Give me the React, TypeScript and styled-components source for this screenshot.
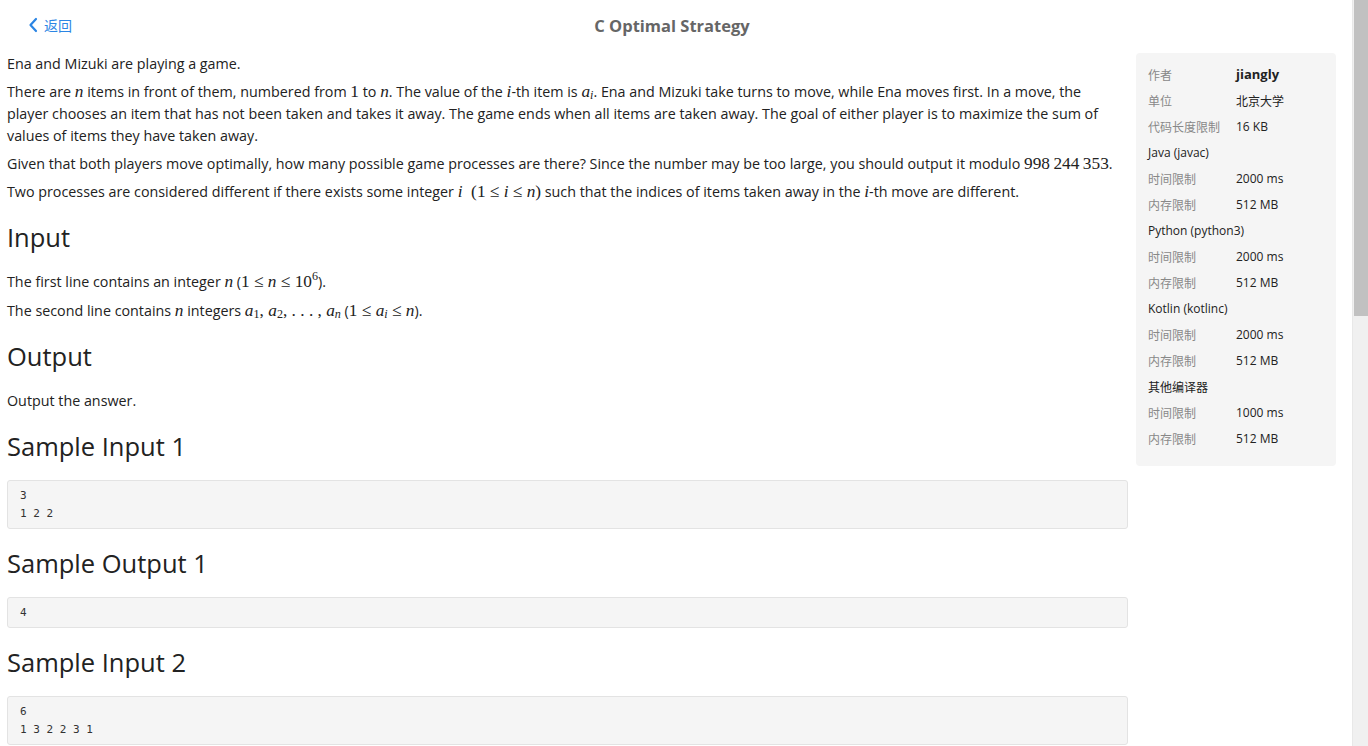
import React from "react";
import styled, { createGlobalStyle } from "styled-components";

const Global = createGlobalStyle`
  html, body { margin: 0; padding: 0; background: #fff; }
  body {
    font-family: "Open Sans", "Noto Sans", "Noto Sans CJK SC", sans-serif;
    color: #222;
  }
`;

const Page = styled.div`
  min-height: 1767px;
  margin-right: 16px;
  box-sizing: border-box;
`;

const ScrollTrack = styled.div`
  position: fixed;
  top: 0;
  right: 0;
  width: 16px;
  height: 100vh;
  background: #f0f0f0;
  border-left: 1px solid #e8e8e8;
  box-sizing: border-box;
`;

const ScrollThumb = styled.div`
  margin-left: 1px;
  width: 14px;
  height: 316px;
  background: #c1c1c1;
`;

const Header = styled.header`
  height: 50px;
  display: grid;
  grid-template-columns: 1fr auto 1fr;
  align-items: center;
  padding: 0 28px;
`;

const BackLink = styled.a`
  display: inline-flex;
  align-items: center;
  gap: 6px;
  color: #2b85e4;
  font-size: 14px;
  font-family: "Noto Sans CJK SC", sans-serif;
  text-decoration: none;
  cursor: pointer;
  justify-self: start;
`;

const Title = styled.h1`
  margin: 0;
  font-size: 16.5px;
  font-weight: 700;
  color: #666;
  font-family: "Open Sans", "Noto Sans CJK SC", sans-serif;
  transform: translateX(-4px);
`;

const Layout = styled.div`
  display: grid;
  grid-template-columns: 1fr 200px;
  column-gap: 8px;
  align-items: start;
  padding: 3px 16px 0 7px;
`;

const Content = styled.main`
  font-size: 14.3px;
  line-height: 22px;
  min-width: 0;
`;

const P = styled.p<{ $tall?: boolean }>`
  margin: 0 0 ${(p) => (p.$tall ? "7px" : "6px")};
`;

const H2 = styled.h2`
  font-size: 25.5px;
  font-weight: 400;
  line-height: 36px;
  margin: 16px 0 16px;
`;

const Code = styled.pre`
  margin: 10px 0 0;
  background: #f5f5f5;
  border: 1px solid #e3e3e3;
  border-radius: 3px;
  padding: 6px 12px 5px;
  font-family: "DejaVu Sans Mono", "Liberation Mono", monospace;
  font-size: 11px;
  line-height: 18px;
  color: #333;
`;

const M = styled.span`
  font-family: "Liberation Serif", "DejaVu Serif", serif;
  font-size: 1.21em;
  line-height: 1;
  white-space: nowrap;
`;

const V = styled.i`
  font-style: italic;
`;

const Sub = styled.sub`
  font-size: 0.7em;
  vertical-align: -0.2em;
  line-height: 0;
`;

const Sup = styled.sup`
  font-size: 0.7em;
  line-height: 0;
`;

const Side = styled.aside`
  background: #f5f5f5;
  border-radius: 4px;
  padding: 8px 12px 15px;
  font-size: 12px;
  font-family: "Open Sans", "Noto Sans CJK SC", sans-serif;
`;

const Row = styled.div`
  display: grid;
  grid-template-columns: 88px 1fr;
  height: 26px;
  align-items: center;
`;

const Label = styled.span`
  color: #888;
  font-family: "Noto Sans CJK SC", sans-serif;
`;

const Value = styled.span<{ $bold?: boolean; $cjk?: boolean }>`
  color: #222;
  font-weight: ${(p) => (p.$bold ? 700 : 400)};
  font-size: ${(p) => (p.$bold ? "13px" : "12px")};
  font-family: ${(p) => (p.$cjk ? `"Noto Sans CJK SC", sans-serif` : "inherit")};
`;

const Lang = styled.div<{ $cjk?: boolean }>`
  height: 26px;
  display: flex;
  align-items: center;
  color: #222;
  font-family: ${(p) => (p.$cjk ? `"Noto Sans CJK SC", sans-serif` : "inherit")};
`;

const limits = [
  { lang: "Java (javac)", time: "2000 ms", mem: "512 MB" },
  { lang: "Python (python3)", time: "2000 ms", mem: "512 MB" },
  { lang: "Kotlin (kotlinc)", time: "2000 ms", mem: "512 MB" },
  { lang: "其他编译器", time: "1000 ms", mem: "512 MB", cjk: true },
];

export default function App() {
  return (
    <Page>
      <Global />
      <ScrollTrack>
        <ScrollThumb />
      </ScrollTrack>
      <Header>
        <BackLink>
          <svg width="10" height="16" viewBox="0 0 10 16">
            <path d="M8 2 L2.5 8 L8 14" fill="none" stroke="#2b85e4" strokeWidth="2.2" strokeLinecap="round" strokeLinejoin="round" />
          </svg>
          返回
        </BackLink>
        <Title>C Optimal Strategy</Title>
        <span />
      </Header>
      <Layout>
        <Content>
          <P>Ena and Mizuki are playing a game.</P>
          <P>
            There are <M><V>n</V></M> items in front of them, numbered from <M>1</M> to <M><V>n</V></M>. The value of the <M><V>i</V></M>-th item is <M><V>a</V><Sub><V>i</V></Sub></M>. Ena and Mizuki take turns to move, while Ena moves first. In a move, the
            <br />
            player chooses an item that has not been taken and takes it away. The game ends when all items are taken away. The goal of either player is to maximize the sum of
            <br />
            values of items they have taken away.
          </P>
          <P>
            Given that both players move optimally, how many possible game processes are there? Since the number may be too large, you should output it modulo <M>998&#8201;244&#8201;353</M>.
          </P>
          <P>
            Two processes are considered different if there exists some integer <M><V>i</V> &nbsp;(1 ≤ <V>i</V> ≤ <V>n</V>)</M> such that the indices of items taken away in the <M><V>i</V></M>-th move are different.
          </P>
          <H2>Input</H2>
          <P $tall>
            The first line contains an integer <M><V>n</V></M> (<M>1 ≤ <V>n</V> ≤ 10<Sup>6</Sup></M>).
          </P>
          <P>
            The second line contains <M><V>n</V></M> integers <M><V>a</V><Sub>1</Sub>, <V>a</V><Sub>2</Sub>, . . . , <V>a</V><Sub><V>n</V></Sub></M> (<M>1 ≤ <V>a</V><Sub><V>i</V></Sub> ≤ <V>n</V></M>).
          </P>
          <H2>Output</H2>
          <P>Output the answer.</P>
          <H2>Sample Input 1</H2>
          <Code>{"3\n1 2 2"}</Code>
          <H2>Sample Output 1</H2>
          <Code>4</Code>
          <H2>Sample Input 2</H2>
          <Code>{"6\n1 3 2 2 3 1"}</Code>
        </Content>
        <Side>
          <Row><Label>作者</Label><Value $bold>jiangly</Value></Row>
          <Row><Label>单位</Label><Value $cjk>北京大学</Value></Row>
          <Row><Label>代码长度限制</Label><Value>16 KB</Value></Row>
          {limits.map((l) => (
            <React.Fragment key={l.lang}>
              <Lang $cjk={l.cjk}>{l.lang}</Lang>
              <Row><Label>时间限制</Label><Value>{l.time}</Value></Row>
              <Row><Label>内存限制</Label><Value>{l.mem}</Value></Row>
            </React.Fragment>
          ))}
        </Side>
      </Layout>
    </Page>
  );
}
